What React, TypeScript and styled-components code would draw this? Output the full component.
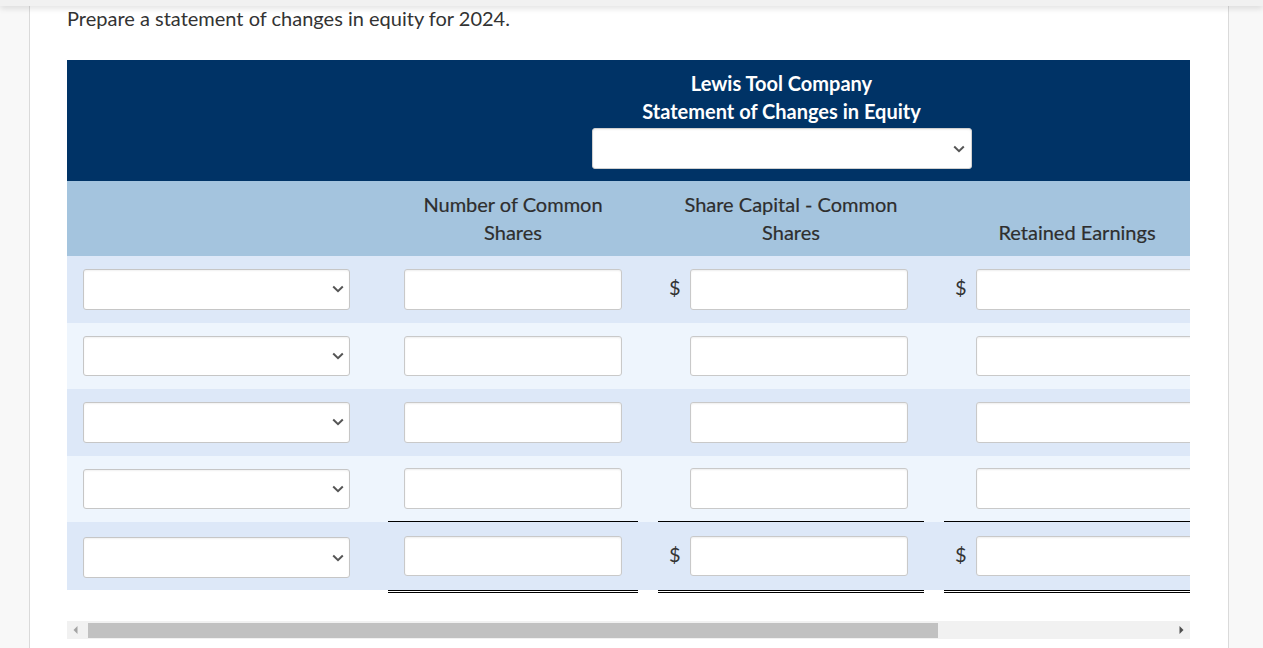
import React from "react";
import styled, { createGlobalStyle } from "styled-components";

const Global = createGlobalStyle`
  html, body { margin: 0; padding: 0; height: 100%; overflow: hidden; background: #f8f8f8; }
  body { font-family: Lato, "Open Sans", Arial, sans-serif; color: #333; }
  * { box-sizing: border-box; }
`;

const Page = styled.div`
  position: relative;
  width: 1263px;
  height: 648px;
  display: flex;
  flex-direction: column;
  background: #f8f8f8;
`;

const TopBar = styled.div`
  height: 6px;
  flex: none;
  background: #f1f1f1;
  box-shadow: 0 2px 6px rgba(0, 0, 0, 0.14);
  position: relative;
  z-index: 2;
`;

const Body = styled.div`
  flex: 1;
  display: flex;
  min-height: 0;
`;

const Side = styled.div`
  width: 30px;
  flex: none;
  background: #f8f8f8;
  border-right: 1px solid #dadada;
`;

const Main = styled.main`
  width: 1199px;
  flex: none;
  background: #fff;
  border-right: 1px solid #dadada;
  padding: 0 38px 0 37px;
  overflow: hidden;
`;

const Prompt = styled.p`
  margin: 0;
  font-size: 20px;
  line-height: 25px;
  color: #333;
`;

const Scroller = styled.div`
  margin-top: 29px;
  width: 1123px;
  overflow: hidden;
`;

const Sheet = styled.div`
  width: 1429px;
`;

const Banner = styled.div`
  background: #003366;
  padding: 9px 0 12px;
  display: flex;
  flex-direction: column;
  align-items: center;
`;

const Title = styled.div`
  color: #fff;
  font-weight: 700;
  font-size: 20px;
  line-height: 28px;
  text-align: center;
`;

const SelectBox = styled.div<{ $w: number; $h: number; $chevronRight: number }>`
  position: relative;
  width: ${(p) => p.$w}px;
  height: ${(p) => p.$h}px;
  background: #fff;
  border: 1px solid #c6c6c6;
  border-radius: 3px;
  box-shadow: inset 0 1px 2px rgba(0, 0, 0, 0.06);
  & > svg {
    position: absolute;
    right: ${(p) => p.$chevronRight}px;
    top: 50%;
    transform: translateY(-50%);
  }
`;

const HeadSelect = styled(SelectBox)`
  margin-top: 3px;
  border-color: #d0d0d0;
`;

const Grid = styled.div`
  display: grid;
  grid-template-columns: 301px 250px 266px 266px 266px;
  column-gap: 20px;
`;

const ColHeadRow = styled(Grid)`
  background: #a4c4de;
  padding: 9px 0 10px;
  align-items: end;
`;

const ColHead = styled.div`
  font-size: 20px;
  line-height: 28px;
  color: #2e2e2e;
  text-align: center;
  -webkit-text-stroke: 0.2px #2e2e2e;
`;

const Row = styled(Grid)<{ $shade: "a" | "b"; $double?: boolean }>`
  height: ${(p) => (p.$double ? 70.5 : 66.6)}px;
  background: linear-gradient(
      ${(p) => (p.$shade === "a" ? "#dde8f8" : "#eef5fd")},
      ${(p) => (p.$shade === "a" ? "#dde8f8" : "#eef5fd")}
    )
    top / 100% calc(100% - ${(p) => (p.$double ? 3 : 0)}px) no-repeat;
`;

const Cell = styled.div<{ $line?: "single" | "double"; $first?: boolean; $money?: boolean }>`
  display: flex;
  align-items: center;
  padding: ${(p) => (p.$first ? "0 0 0 16px" : p.$money ? "0 16px 0 11px" : "0 16px")};
  border-bottom: ${(p) =>
    p.$line === "single" ? "1px solid #000" : p.$line === "double" ? "3px double #000" : "0"};
`;

const EndCell = styled(Cell)`
  padding-left: 32px;
`;

const Dollar = styled.span<{ $show: boolean }>`
  width: 21px;
  flex: none;
  font-size: 20px;
  line-height: 24px;
  padding-bottom: 5px;
  color: #333;
  visibility: ${(p) => (p.$show ? "visible" : "hidden")};
`;

const TextInput = styled.input`
  width: 218px;
  height: 40.6px;
  flex: none;
  border: 1px solid #c9c9c9;
  border-radius: 3px;
  background: #fff;
  box-shadow: inset 0 1px 2px rgba(0, 0, 0, 0.07);
  font: inherit;
  outline: none;
`;

const ScrollTrack = styled.div`
  margin-top: 28px;
  width: 1123px;
  height: 18px;
  background: #f1f1f1;
  display: flex;
  align-items: center;
`;

const ArrowBtn = styled.div`
  width: 17px;
  height: 18px;
  flex: none;
  display: flex;
  align-items: center;
  justify-content: center;
`;

const TrackArea = styled.div`
  flex: 1;
  height: 100%;
  padding: 2px 0 1px 4px;
  display: flex;
`;

const Thumb = styled.div`
  width: 850px;
  height: 100%;
  background: #c1c1c1;
`;

const Chevron = () => (
  <svg width="12" height="8" viewBox="0 0 12 8">
    <polyline points="1.2,1.5 6,6.2 10.8,1.5" fill="none" stroke="#555" strokeWidth="2" />
  </svg>
);

type RowSpec = { shade: "a" | "b"; dollars: boolean; line?: "single" | "double" };

const rows: RowSpec[] = [
  { shade: "a", dollars: true },
  { shade: "b", dollars: false },
  { shade: "a", dollars: false },
  { shade: "b", dollars: false, line: "single" },
  { shade: "a", dollars: true, line: "double" },
];

export default function App() {
  return (
    <>
      <Global />
      <Page>
        <TopBar />
        <Body>
          <Side />
          <Main>
            <Prompt>Prepare a statement of changes in equity for 2024.</Prompt>
            <Scroller>
              <Sheet>
                <Banner>
                  <Title>Lewis Tool Company</Title>
                  <Title>Statement of Changes in Equity</Title>
                  <HeadSelect $w={380} $h={41} $chevronRight={6}>
                    <Chevron />
                  </HeadSelect>
                </Banner>
                <ColHeadRow>
                  <ColHead />
                  <ColHead>
                    Number of Common
                    <br />
                    Shares
                  </ColHead>
                  <ColHead>
                    Share Capital - Common
                    <br />
                    Shares
                  </ColHead>
                  <ColHead>Retained Earnings</ColHead>
                  <ColHead />
                </ColHeadRow>
                {rows.map((r, i) => (
                  <Row key={i} $shade={r.shade} $double={r.line === "double"}>
                    <Cell $first>
                      <SelectBox $w={267} $h={40.6} $chevronRight={5}>
                        <Chevron />
                      </SelectBox>
                    </Cell>
                    <Cell $line={r.line}>
                      <TextInput />
                    </Cell>
                    <Cell $line={r.line} $money>
                      <Dollar $show={r.dollars}>$</Dollar>
                      <TextInput />
                    </Cell>
                    <Cell $line={r.line} $money>
                      <Dollar $show={r.dollars}>$</Dollar>
                      <TextInput />
                    </Cell>
                    <EndCell $line={r.line} $money>
                      <TextInput />
                    </EndCell>
                  </Row>
                ))}
              </Sheet>
            </Scroller>
            <ScrollTrack>
              <ArrowBtn>
                <svg width="5" height="8" viewBox="0 0 5 8">
                  <polygon points="4.5,0 0.5,4 4.5,8" fill="#a3a3a3" />
                </svg>
              </ArrowBtn>
              <TrackArea>
                <Thumb />
              </TrackArea>
              <ArrowBtn>
                <svg width="5" height="8" viewBox="0 0 5 8">
                  <polygon points="0.5,0 4.5,4 0.5,8" fill="#505050" />
                </svg>
              </ArrowBtn>
            </ScrollTrack>
          </Main>
        </Body>
      </Page>
    </>
  );
}
